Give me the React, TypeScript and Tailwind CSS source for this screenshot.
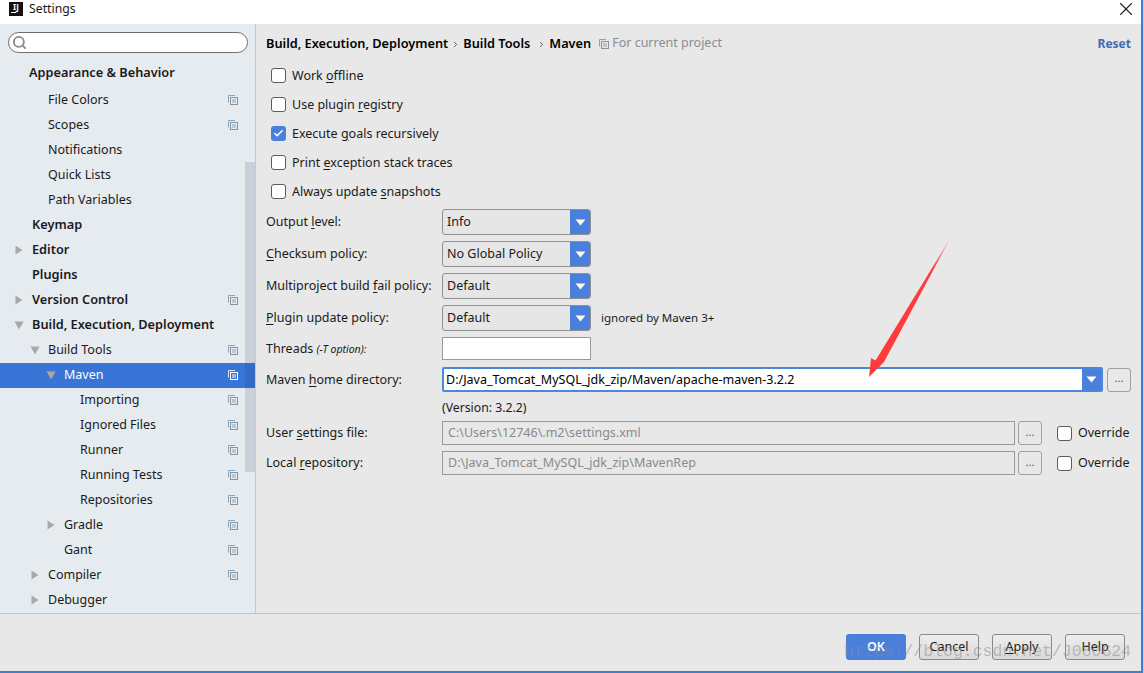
import React from 'react';
import { Search, X, Check, ChevronRight } from 'lucide-react';

const font = "font-['Noto_Sans',sans-serif]";

const ProjectIcon = ({ light = false }: { light?: boolean }) => (
  <svg width="10" height="10" viewBox="0 0 10 10" fill="none" className="block shrink-0">
    <path d="M0.5 7.5V0.5H7" stroke={light ? '#dbe6f8' : '#7fa6c4'} />
    <rect x="2.5" y="2.5" width="7" height="7" stroke={light ? '#ffffff' : '#8c9499'} />
    <path d="M4 5H8M4 7H8" stroke={light ? '#ffffff' : '#9aa1a6'} />
  </svg>
);

const Tri = ({ dir }: { dir?: 'down' | 'right' }) =>
  dir === 'down' ? (
    <svg width="10" height="9" viewBox="0 0 10 9" className="block shrink-0"><path d="M0.5 0.5H9.5L5 8.5Z" fill="#a8a8a8" /></svg>
  ) : dir === 'right' ? (
    <svg width="8" height="10" viewBox="0 0 8 10" className="block shrink-0"><path d="M0.5 0.5V9.5L7.5 5Z" fill="#a8a8a8" /></svg>
  ) : null;

type Node = { label: string; indent: number; bold?: boolean; icon?: boolean; dir?: 'down' | 'right'; selected?: boolean; gap?: boolean };

const tree: Node[] = [
  { label: 'Appearance & Behavior', indent: 29, bold: true, gap: true },
  { label: 'File Colors', indent: 48, icon: true },
  { label: 'Scopes', indent: 48, icon: true },
  { label: 'Notifications', indent: 48 },
  { label: 'Quick Lists', indent: 48 },
  { label: 'Path Variables', indent: 48 },
  { label: 'Keymap', indent: 32, bold: true },
  { label: 'Editor', indent: 32, bold: true, dir: 'right' },
  { label: 'Plugins', indent: 32, bold: true },
  { label: 'Version Control', indent: 32, bold: true, dir: 'right', icon: true },
  { label: 'Build, Execution, Deployment', indent: 32, bold: true, dir: 'down' },
  { label: 'Build Tools', indent: 48, dir: 'down', icon: true },
  { label: 'Maven', indent: 64, dir: 'down', icon: true, selected: true },
  { label: 'Importing', indent: 80, icon: true },
  { label: 'Ignored Files', indent: 80, icon: true },
  { label: 'Runner', indent: 80, icon: true },
  { label: 'Running Tests', indent: 80, icon: true },
  { label: 'Repositories', indent: 80, icon: true },
  { label: 'Gradle', indent: 64, dir: 'right', icon: true },
  { label: 'Gant', indent: 64, icon: true },
  { label: 'Compiler', indent: 48, dir: 'right', icon: true },
  { label: 'Debugger', indent: 48, dir: 'right' },
];

const TreeRow = ({ node }: { node: Node }) => (
  <div
    className={`relative flex h-[25px] shrink-0 items-center pr-[17px] ${node.selected ? 'bg-[#3875d7] text-white' : 'text-[#1a1a1a]'} ${node.bold ? 'text-[12.75px] font-semibold' : 'text-[12.5px]'} ${node.gap ? 'mb-[2px]' : ''}`}
    style={{ paddingLeft: node.indent }}
  >
    {node.dir && (
      <span className={`absolute ${node.dir === 'down' ? 'top-[8px]' : 'top-[7px]'}`} style={{ left: node.indent - (node.dir === 'down' ? 18 : 17) }}>
        <Tri dir={node.dir} />
      </span>
    )}
    <span className={`flex-1 whitespace-nowrap ${node.bold ? '-translate-y-px' : ''}`}>{node.label}</span>
    {node.icon && <span className="-translate-y-px"><ProjectIcon light={node.selected} /></span>}
  </div>
);

const Box = ({ checked = false }: { checked?: boolean }) =>
  checked ? (
    <span className="flex h-[15px] w-[15px] shrink-0 items-center justify-center rounded-[3px] bg-[#4a7fdc]">
      <Check size={11} strokeWidth={3.5} className="text-white" />
    </span>
  ) : (
    <span className="block h-[15px] w-[15px] shrink-0 rounded-[3px] border border-[#5c5c5c] bg-white" />
  );

const CheckRow = ({ pre, u, post, checked }: { pre: string; u: string; post: string; checked?: boolean }) => (
  <div className="flex h-[29px] items-center gap-[6px] pl-[5px]">
    <Box checked={checked} />
    <span className="translate-y-px">{pre}<u className="underline-offset-2">{u}</u>{post}</span>
  </div>
);

const Label = ({ pre = '', u = '', post = '', shift = false }: { pre?: string; u?: string; post?: string; shift?: boolean }) => (
  <span className={`w-[176px] shrink-0 whitespace-nowrap ${shift ? 'translate-y-px' : ''}`}>{pre}<u className="underline-offset-2">{u}</u>{post}</span>
);

const Caret = () => (
  <svg width="11" height="7" viewBox="0 0 11 7"><path d="M0.5 0.5H10.5L5.5 6.5Z" fill="#fff" /></svg>
);

const SelectRow = ({ pre, u, post, value, note }: { pre: string; u: string; post: string; value: string; note?: string }) => (
  <div className="flex h-[26px] items-center">
    <Label pre={pre} u={u} post={post} />
    <div className="flex h-full w-[149px] overflow-hidden rounded-[3px] border border-[#8f8f8f] bg-[#e6e6e6]">
      <span className="flex-1 self-center pl-[4px]">{value}</span>
      <span className="-my-px -mr-px flex w-[21px] items-center justify-center bg-[#4a7fdc]"><Caret /></span>
    </div>
    {note && <span className="ml-[10px] text-[11.5px]">{note}</span>}
  </div>
);

const MoreBtn = ({ w = 'w-[24px]' }: { w?: string }) => (
  <span className={`flex h-[24px] shrink-0 ${w} items-center justify-center rounded-[3px] border border-[#a0a0a0] bg-[#e8e8e8] pb-[2px] text-[11px] text-[#555]`}>...</span>
);

const PathRow = ({ pre, u, post, value }: { pre: string; u: string; post: string; value: string }) => (
  <div className="flex h-[24px] items-center">
    <Label pre={pre} u={u} post={post} />
    <div className="flex h-full w-[573px] items-center border border-[#999] pl-[5px] text-[#8a8a8a]"><span>{value}</span></div>
    <div className="ml-[3px]"><MoreBtn /></div>
    <div className="ml-[15px]"><Box /></div>
    <span className="ml-[6px]">Override</span>
  </div>
);

const FooterBtn = ({ children, primary = false }: { children: React.ReactNode; primary?: boolean }) => (
  <button className={`flex h-[26px] w-[60px] items-center justify-center rounded-[3px] text-[12.5px] ${primary ? 'bg-[#4a7fdc] font-semibold text-white' : 'border border-[#8a8a8a] bg-gradient-to-b from-[#eeeeee] to-[#d9d9d9] text-[#1a1a1a]'}`}>
    {children}
  </button>
);

export default function App() {
  return (
    <div className="h-[673px] w-[1144px] overflow-hidden bg-[#c9ced3]">
      <div className={`${font} relative flex h-[673px] w-[1143px] flex-col overflow-hidden border-r-2 border-r-[#3f80c4] bg-[#e8e8e8] text-[12.5px] text-[#1a1a1a]`}>
        {/* title bar */}
        <div className="flex h-[24px] shrink-0 items-start bg-white pl-[9px] pr-[4px] pt-[2px]">
          <span className="flex h-[14px] w-[14px] flex-col items-center bg-[#111] text-[8px] font-bold leading-[9px] text-white">
            IJ
            <span className="mr-[5px] mt-[1px] h-px w-[5px] bg-white" />
          </span>
          <span className="ml-[6px] flex-1 -translate-y-[2px] text-[12.25px]">Settings</span>
          <X size={22} strokeWidth={1.2} className="-mt-[4px] text-[#222]" />
        </div>

        <div className="flex min-h-0 flex-1">
          {/* sidebar */}
          <aside className="relative flex w-[255px] shrink-0 flex-col overflow-hidden bg-[#e6ebf0]">
            <div className="ml-[8px] mr-[7px] mt-[8px] flex h-[21px] shrink-0 items-center rounded-full border border-[#6b6b6b] bg-white pl-[3px]">
              <Search size={15} strokeWidth={3} className="text-[#8a8a8a]" />
            </div>
            <div className="mt-[8px] flex flex-col">
              {tree.map((n) => <TreeRow key={n.label} node={n} />)}
            </div>
            {/* scrollbar thumb */}
            <div className="absolute left-[245px] top-[138px] h-[310px] w-[10px] bg-[#22345a]/15" />
          </aside>

          {/* main panel */}
          <main className="flex min-w-0 flex-1 flex-col border-l border-[#c9c9c9] pl-[10px] pr-[10px]">
            <div className="flex h-[37px] shrink-0 translate-y-px items-center text-[12.75px]">
              <span className="font-semibold text-black">Build, Execution, Deployment</span>
              <ChevronRight size={9} strokeWidth={2} className="mx-[3px] mt-[2px] text-[#333]" />
              <span className="font-semibold text-black">Build Tools</span>
              <ChevronRight size={9} strokeWidth={2} className="ml-[7px] mr-[3px] mt-[2px] text-[#333]" />
              <span className="font-semibold text-black">Maven</span>
              <span className="ml-[8px] mr-[3px]"><ProjectIcon /></span>
              <span className="flex-1 text-[12.5px] text-[#8c8c8c]">For current project</span>
              <span className="text-[12px] font-bold text-[#3f6db5]">Reset</span>
            </div>

            <CheckRow pre="Work " u="o" post="ffline" />
            <CheckRow pre="Use plugin " u="r" post="egistry" />
            <CheckRow pre="Execute " u="g" post="oals recursively" checked />
            <CheckRow pre="Print " u="e" post="xception stack traces" />
            <CheckRow pre="Always update " u="s" post="napshots" />

            <div className="mt-[3px] flex flex-col gap-[6px]">
              <SelectRow pre="Output " u="l" post="evel:" value="Info" />
              <SelectRow pre="" u="C" post="hecksum policy:" value="No Global Policy" />
              <SelectRow pre="Multiproject build " u="f" post="ail policy:" value="Default" />
              <SelectRow pre="" u="P" post="lugin update policy:" value="Default" note="ignored by Maven 3+" />
            </div>

            <div className="mt-[6px] flex h-[23px] items-center">
              <span className="w-[176px] translate-y-px">Threads <i className="text-[10.5px]">(-T option):</i></span>
              <div className="h-full w-[149px] border border-[#999] bg-white" />
            </div>

            <div className="mt-[7px] flex h-[25px] items-center">
              <Label shift pre="Maven " u="h" post="ome directory:" />
              <div className="flex h-full w-[661px] overflow-hidden rounded-[2px] border-2 border-[#4a88dc] bg-white">
                <span className="flex-1 translate-y-px self-center pl-[2px] text-black">D:/Java_Tomcat_MySQL_jdk_zip/Maven/apache-maven-3.2.2</span>
                <span className="flex w-[19px] items-center justify-center bg-[#4a7fdc]"><Caret /></span>
              </div>
              <div className="ml-[4px]"><MoreBtn /></div>
            </div>

            <div className="flex h-[29px] items-center pl-[176px]"><span className="translate-y-[2px] text-[12.25px]">(Version: 3.2.2)</span></div>

            <div className="flex flex-col gap-[6px]">
              <PathRow pre="User " u="s" post="ettings file:" value="C:\Users\12746\.m2\settings.xml" />
              <PathRow pre="Local " u="r" post="epository:" value="D:\Java_Tomcat_MySQL_jdk_zip\MavenRep" />
            </div>
          </main>
        </div>

        {/* footer */}
        <footer className="flex h-[60px] shrink-0 justify-end gap-[13px] border-t border-t-[#c4c4c4] border-b-2 border-b-[#3f80c4] pr-[16px] pt-[20px]">
          <FooterBtn primary>OK</FooterBtn>
          <FooterBtn>Cancel</FooterBtn>
          <FooterBtn><span><u className="underline-offset-2">A</u>pply</span></FooterBtn>
          <FooterBtn>Help</FooterBtn>
        </footer>

        {/* annotation arrow drawn over the screenshot */}
        <svg className="pointer-events-none absolute left-[860px] top-[230px]" width="100" height="155" viewBox="860 230 100 155">
          <defs>
            <linearGradient id="arrowFade" x1="951" y1="237" x2="880" y2="360" gradientUnits="userSpaceOnUse">
              <stop offset="0" stopColor="#ff3b3b" stopOpacity="0.2" />
              <stop offset="0.25" stopColor="#ff3b3b" />
              <stop offset="1" stopColor="#ff3b3b" />
            </linearGradient>
          </defs>
          <path d="M951 237L884 362L869 377L871 358L875.5 360.5Z" fill="url(#arrowFade)" />
        </svg>

        {/* watermark */}
        <span className="pointer-events-none absolute left-[844px] top-[640px] font-['Liberation_Mono',monospace] text-[16.5px] text-[#8a8a8a]/50">https://blog.csdn.net/J080624</span>
      </div>
    </div>
  );
}
